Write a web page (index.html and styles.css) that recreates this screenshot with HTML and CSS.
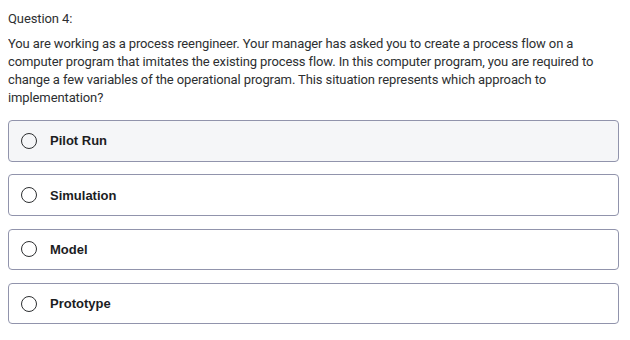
FILE: index.html
```html
<!DOCTYPE html>
<html>
<head>
<meta charset="utf-8">
<link rel="stylesheet" href="styles.css">
</head>
<body>
<div class="quiz">
  <div class="q-title">Question 4:</div>
  <p class="q-text">You are working as a process reengineer. Your manager has asked you to create a process flow on a computer program that imitates the existing process flow. In this computer program, you are required to change a few variables of the operational program. This situation represents which approach to implementation?</p>
  <ul class="options">
    <li class="option hover"><span class="radio"></span><span class="label">Pilot Run</span></li>
    <li class="option"><span class="radio"></span><span class="label">Simulation</span></li>
    <li class="option"><span class="radio"></span><span class="label">Model</span></li>
    <li class="option"><span class="radio"></span><span class="label">Prototype</span></li>
  </ul>
</div>
</body>
</html>
```
FILE: styles.css
```css
body {
  margin: 8px;
  background: #fff;
  font-family: Roboto, "Liberation Sans", sans-serif;
  color: #2d2f31;
}
.quiz {
  width: 611px;
}
.q-title {
  font-size: 13px;
  line-height: 18px;
  margin-top: 2px;
  letter-spacing: -0.1px;
}
.q-text {
  font-size: 13px;
  line-height: 18px;
  margin: 7px 0 0 0;
  letter-spacing: -0.11px;
}
.options {
  list-style: none;
  margin: 13px 0 0 0;
  padding: 0;
  display: flex;
  flex-direction: column;
  gap: 12.8px;
}
.option {
  height: 41.5px;
  box-sizing: border-box;
  border: 1px solid #9194ac;
  border-radius: 4px;
  display: flex;
  align-items: center;
  padding-left: 12px;
  gap: 13px;
}
.option.hover {
  background: #f5f6f8;
}
.radio {
  width: 16px;
  height: 16px;
  box-sizing: border-box;
  border: 1.5px solid #2d2f31;
  border-radius: 50%;
}
.label {
  font-family: "Liberation Sans", Arial, sans-serif;
  font-weight: bold;
  font-size: 13px;
  color: #1c1d1f;
}
```
